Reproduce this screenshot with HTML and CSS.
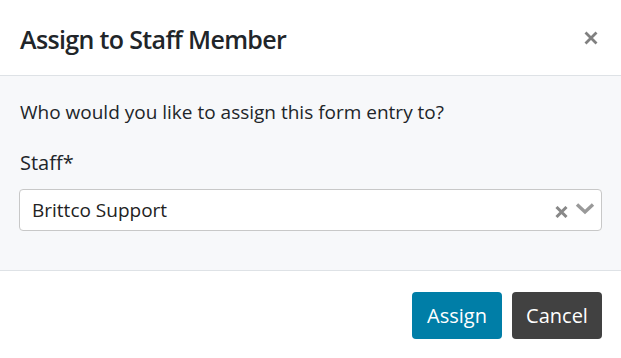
FILE: index.html
```html
<!DOCTYPE html>
<html>
<head>
<meta charset="utf-8">
<link rel="stylesheet" href="styles.css">
</head>
<body>
<div class="modal">
  <div class="modal-header">
    <h5 class="modal-title">Assign to Staff Member</h5>
    <button class="close" aria-label="Close">
      <svg width="14" height="14" viewBox="0 0 14 14"><path d="M1.5 1.5L12.5 12.5M12.5 1.5L1.5 12.5" stroke="#808080" stroke-width="2.8" stroke-linecap="butt"/></svg>
    </button>
  </div>
  <div class="modal-body">
    <p class="question">Who would you like to assign this form entry to?</p>
    <label class="label">Staff*</label>
    <div class="select">
      <span class="value">Brittco Support</span>
      <span class="indicators">
        <svg class="clear" width="13" height="12" viewBox="0 0 13 12"><path d="M1.5 1L11.5 11M11.5 1L1.5 11" stroke="#888" stroke-width="3"/></svg>
        <svg class="chev" width="20" height="13" viewBox="0 0 20 13"><path d="M2 2.5L10 10L18 2.5" fill="none" stroke="#999" stroke-width="3.4"/></svg>
      </span>
    </div>
  </div>
  <div class="modal-footer">
    <button class="btn btn-primary">Assign</button>
    <button class="btn btn-secondary">Cancel</button>
  </div>
</div>
</body>
</html>
```

FILE: styles.css
```css
html, body {
  margin: 0;
  padding: 0;
  background: #ffffff;
}
body {
  font-family: "Open Sans", "Noto Sans", sans-serif;
  color: #212529;
}
.modal {
  width: 621px;
  height: 358px;
  display: flex;
  flex-direction: column;
}
.modal-header {
  height: 76px;
  box-sizing: border-box;
  border-bottom: 1px solid #dee2e6;
  display: flex;
  align-items: center;
  justify-content: space-between;
  padding: 0 23px 0 20px;
}
.modal-title {
  margin: 0;
  font-size: 25px;
  font-weight: 600;
  color: #212529;
  letter-spacing: -0.65px;
  line-height: 30px;
  position: relative;
  top: 1px;
}
.close {
  border: 0;
  background: none;
  padding: 0;
  display: flex;
}
.modal-body {
  background: #f7f8fa;
  height: 195px;
  box-sizing: border-box;
  border-bottom: 1px solid #dee2e6;
  padding: 22px 19px 0 19px;
}
.question {
  margin: 0 0 0 1px;
  font-size: 19px;
  line-height: 28px;
}
.label {
  display: block;
  margin: 23px 0 0 1px;
  font-size: 20px;
  line-height: 28px;
}
.select {
  margin-top: 12px;
  height: 42px;
  box-sizing: border-box;
  border: 1px solid #c8c8c8;
  border-radius: 4px;
  background: #fff;
  display: flex;
  align-items: center;
  justify-content: space-between;
  padding: 0 6px 0 12px;
}
.value {
  font-size: 19px;
  color: #222;
}
.indicators {
  display: flex;
  align-items: center;
  gap: 7px;
}
.clear {
  margin-top: 4px;
}
.chev {
  margin-top: -4px;
}
.modal-footer {
  flex: 1;
  display: flex;
  justify-content: flex-end;
  align-items: flex-start;
  padding: 21px 19px 0 0;
  gap: 10px;
}
.btn {
  height: 47px;
  border: 0;
  border-radius: 4px;
  font-family: inherit;
  font-size: 20px;
  color: #fff;
  padding: 0;
  cursor: pointer;
}
.btn-primary {
  width: 90px;
  background: #007ea7;
}
.btn-secondary {
  width: 90px;
  background: #414141;
}
```
